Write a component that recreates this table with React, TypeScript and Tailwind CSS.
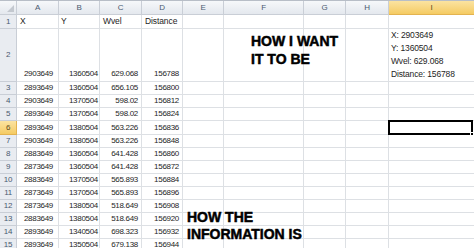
import { FC, ReactNode } from 'react'

const cols = ['A', 'B', 'C', 'D', 'E', 'F', 'G', 'H', 'I']

const rows: [string, string, string, string][] = [
  ['2903649', '1360504', '629.068', '156788'],
  ['2893649', '1360504', '656.105', '156800'],
  ['2903649', '1370504', '598.02', '156812'],
  ['2893649', '1370504', '598.02', '156824'],
  ['2893649', '1380504', '563.226', '156836'],
  ['2903649', '1380504', '563.226', '156848'],
  ['2883649', '1360504', '641.428', '156860'],
  ['2873649', '1360504', '641.428', '156872'],
  ['2883649', '1370504', '565.893', '156884'],
  ['2873649', '1370504', '565.893', '156896'],
  ['2873649', '1380504', '518.649', '156908'],
  ['2883649', '1380504', '518.649', '156920'],
  ['2893649', '1340504', '698.323', '156932'],
  ['2893649', '1350504', '679.138', '156944'],
]

// right padding per numeric column, matches where the digits stop
const numPad = ['pr-[5px]', 'pr-[1px]', 'pr-[3px]', 'pr-[3px]']

const ColHeader: FC<{ label: string; active?: boolean }> = ({ label, active }) => (
  <div
    className={
      active
        ? 'flex items-center justify-center border-r border-b border-[#e3b350] bg-gradient-to-b from-[#fbe3a0] to-[#f5cb62] text-[#5b4a1f]'
        : 'flex items-center justify-center border-r border-b border-[#c9ced6] bg-gradient-to-b from-[#f6f8fa] to-[#e4e8ee] text-[#4a5a70]'
    }
  >
    {label}
  </div>
)

const RowHeader: FC<{ n: number; active?: boolean }> = ({ n, active }) => (
  <div
    className={
      active
        ? 'flex items-center justify-center border-r border-b border-[#e3b350] bg-gradient-to-b from-[#fbe3a0] to-[#f5cb62] text-[#5b4a1f]'
        : 'flex items-center justify-center border-r border-b border-[#c9ced6] bg-[#e9ecf1] text-[#4a5a70]'
    }
  >
    {n}
  </div>
)

const Cell: FC<{ children?: ReactNode; className?: string }> = ({ children, className = '' }) => (
  <div className={`relative flex border-r border-b border-[#dde0e4] whitespace-nowrap ${className}`}>
    {children}
  </div>
)

export default function App() {
  return (
    <div className="relative w-[474px] h-[248px] overflow-hidden bg-white font-['Liberation_Sans',Arial,sans-serif] text-[8px] tracking-[-0.3px] text-[#1e1e1e]">
      <div className="grid grid-cols-[17px_42px_41px_42px_41px_41px_80px_42px_43px_86px] grid-rows-[14px_14px_53px_13px_13px_13px_14px_13px_13px_13px_13px_13px_13px_13px_13px_13px] border-t border-[#b8bec7]">
        {/* header row */}
        <div className="relative border-r border-b border-[#c9ced6] bg-gradient-to-b from-[#f6f8fa] to-[#e4e8ee]">
          <svg className="absolute right-[2px] bottom-[2px]" width="7" height="7" viewBox="0 0 7 7">
            <polygon points="7,0 7,7 0,7" fill="#c3c8cf" />
          </svg>
        </div>
        {cols.map((c) => (
          <ColHeader key={c} label={c} active={c === 'I'} />
        ))}

        {/* row 1 */}
        <RowHeader n={1} />
        <Cell className="items-center pl-[3px] text-[8.5px] tracking-[-0.1px]">X</Cell>
        <Cell className="items-center pl-[2px] text-[8.5px] tracking-[-0.1px]">Y</Cell>
        <Cell className="items-center pl-[3px] text-[8.5px] tracking-[-0.1px]">Wvel</Cell>
        <Cell className="items-center pl-[3px] text-[8.5px] tracking-[-0.1px]">Distance</Cell>
        <Cell />
        <Cell />
        <Cell />
        <Cell />
        <Cell />

        {rows.map((r, i) => {
          const n = i + 2
          const first = n === 2
          return [
            <RowHeader key={`h${n}`} n={n} active={n === 6} />,
            ...r.map((v, j) => (
              <Cell
                key={`${n}-${j}`}
                className={`justify-end ${numPad[j]} ${first ? 'items-end pb-[1px]' : 'items-center'}`}
              >
                {v}
              </Cell>
            )),
            <Cell key={`${n}-e`} />,
            <Cell key={`${n}-f`} />,
            <Cell key={`${n}-g`} />,
            <Cell key={`${n}-h`} />,
            <Cell key={`${n}-i`} className="flex-col pl-[2px] leading-[13px] text-[8.5px] tracking-[-0.15px]">
              {first && (
                <>
                  <span>X: 2903649</span>
                  <span>Y: 1360504</span>
                  <span>Wvel: 629.068</span>
                  <span>Distance: 156788</span>
                </>
              )}
              {n === 6 && (
                <div className="absolute -left-[1px] -top-[1px] w-[85px] h-[15px] border-2 border-black">
                  <div className="absolute -right-[3px] -bottom-[3px] w-[4px] h-[4px] bg-black border border-white" />
                </div>
              )}
            </Cell>,
          ]
        })}
      </div>

      {/* floating text boxes */}
      <div className="absolute left-[251px] top-[33px] text-[14px] leading-[17.5px] tracking-normal font-bold text-black [-webkit-text-stroke:0.5px_black]">
        HOW I WANT
        <br />
        IT TO BE
      </div>
      <div className="absolute left-[187px] top-[209px] text-[14px] leading-[17.3px] tracking-normal font-bold text-black [-webkit-text-stroke:0.5px_black]">
        HOW THE
        <br />
        INFORMATION IS
      </div>
    </div>
  )
}
